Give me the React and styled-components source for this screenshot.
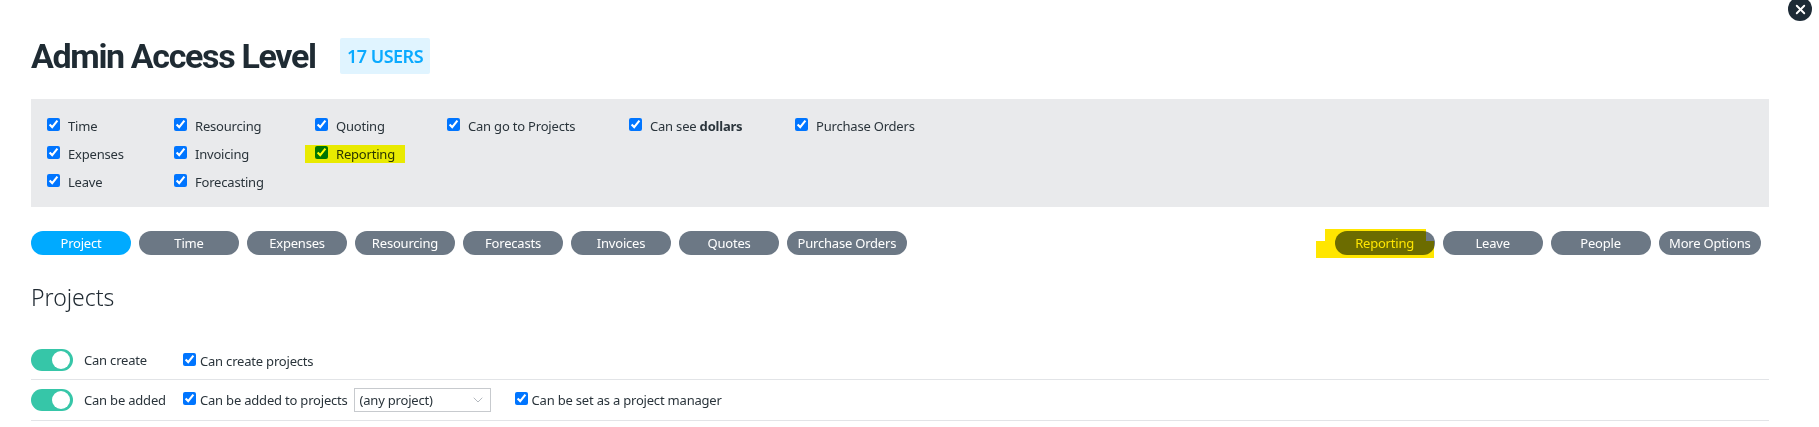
import React from "react";
import styled, { createGlobalStyle } from "styled-components";
import { ChevronDown, X } from "lucide-react";

const Global = createGlobalStyle`
  html, body { margin: 0; padding: 0; background: #fff; overflow: hidden; }
  body { font-family: "Noto Sans", "Open Sans", sans-serif; color: #212b33; }
`;

const Page = styled.div`
  position: relative;
  width: 1819px;
  height: 427px;
  box-sizing: border-box;
  padding: 38px 50px 0 31px;
`;

const CloseButton = styled.button`
  position: absolute;
  top: -3px;
  left: 1788px;
  width: 24px;
  height: 24px;
  padding: 0;
  border: 0;
  border-radius: 50%;
  background: #1d2b36;
  color: #fff;
  display: flex;
  align-items: center;
  justify-content: center;
`;

const Header = styled.header`
  display: flex;
  align-items: center;
  gap: 25px;
  height: 36px;
`;

const Title = styled.h1`
  margin: 0;
  font-family: "Roboto", sans-serif;
  font-weight: 700;
  font-size: 34px;
  line-height: 36px;
  letter-spacing: -1.35px;
  color: #1f2b33;
  width: 284px;
  white-space: nowrap;
`;

const Badge = styled.span`
  display: flex;
  align-items: center;
  justify-content: center;
  width: 90px;
  height: 36px;
  border-radius: 2px;
  background: #e0f4ff;
  color: #0aaaff;
  font-size: 18px;
  letter-spacing: -0.5px;
  font-weight: 600;
  white-space: nowrap;
`;

const AccessPanel = styled.section`
  display: flex;
  margin-top: 25px;
  height: 108px;
  box-sizing: border-box;
  padding: 13px 0 0 16px;
  background: #e9eaec;
`;

const AccessColumn = styled.div`
  display: flex;
  flex-direction: column;
  width: ${(p) => p.$width}px;
  flex: none;
`;

const AccessItem = styled.label`
  position: relative;
  display: flex;
  align-items: center;
  height: 28px;
  gap: 8px;
  font-size: 13px;
  letter-spacing: -0.2px;
  color: #2a343b;
  white-space: nowrap;
`;

const Check = styled.input.attrs({ type: "checkbox", defaultChecked: true })`
  width: 13px;
  height: 13px;
  margin: 0 0 3px 0;
  flex: none;
  accent-color: #0075ff;
`;

const Highlight = styled.span`
  position: absolute;
  left: ${(p) => p.$left}px;
  top: ${(p) => p.$top}px;
  width: ${(p) => p.$w}px;
  height: ${(p) => p.$h}px;
  background: ${(p) => p.$color};
  mix-blend-mode: multiply;
  pointer-events: none;
`;

const PillBar = styled.nav`
  display: flex;
  justify-content: space-between;
  margin-top: 24px;
  padding-right: 8px;
`;

const PillGroup = styled.div`
  display: flex;
  gap: 8px;
`;

const Pill = styled.button`
  position: relative;
  min-width: 100px;
  height: 24px;
  padding: 1px 10.5px 0;
  box-sizing: border-box;
  border: 0;
  border-radius: 12px;
  background: ${(p) => (p.$active ? "#00aaff" : "#6c7885")};
  color: #fff;
  font-family: inherit;
  font-size: 13px;
  letter-spacing: -0.2px;
  line-height: 23px;
  white-space: nowrap;
`;

const SectionTitle = styled.h2`
  margin: 29px 0 0;
  font-size: 23px;
  line-height: 26px;
  font-weight: 300;
  color: #212b33;
`;

const Rows = styled.div`
  margin-top: 30px;
`;

const Row = styled.div`
  display: flex;
  align-items: center;
  height: ${(p) => p.$height}px;
  box-sizing: border-box;
  border-bottom: 1px solid #e2e4e7;
`;

const Toggle = styled.span`
  display: flex;
  justify-content: flex-end;
  align-items: center;
  flex: none;
  width: 42px;
  height: 22px;
  padding: 2px 3px;
  box-sizing: border-box;
  border-radius: 11px;
  background: #36c6a8;
`;

const Knob = styled.span`
  width: 18px;
  height: 18px;
  border-radius: 50%;
  background: #fff;
`;

const RowLabel = styled.span`
  width: 99px;
  margin-left: 11px;
  flex: none;
  font-size: 13px;
  letter-spacing: -0.2px;
  color: #2a343b;
  white-space: nowrap;
`;

const Option = styled.label`
  display: flex;
  align-items: center;
  gap: 4px;
  font-size: 13px;
  letter-spacing: -0.2px;
  color: #2a343b;
  white-space: nowrap;
  margin-left: ${(p) => p.$offset || 0}px;
  padding-top: ${(p) => p.$down || 0}px;
`;

const SelectWrap = styled.span`
  position: relative;
  display: block;
  width: 137px;
  height: 24px;
  margin-left: 6px;
  flex: none;
  color: #b4b9bf;
`;

const Select = styled.select`
  appearance: none;
  width: 100%;
  height: 100%;
  box-sizing: border-box;
  padding: 0 5px;
  border: 1px solid #c7cace;
  border-radius: 0;
  background: #fff;
  color: #2a343b;
  font-family: inherit;
  font-size: 13px;
  letter-spacing: -0.2px;
`;

const SelectIcon = styled(ChevronDown)`
  position: absolute;
  right: 5px;
  top: 4px;
  pointer-events: none;
`;

const columns = [
  { width: 127, items: ["Time", "Expenses", "Leave"] },
  { width: 141, items: ["Resourcing", "Invoicing", "Forecasting"] },
  { width: 132, items: ["Quoting", "Reporting"] },
  { width: 182, items: ["Can go to Projects"] },
  { width: 166, items: [<React.Fragment key="d">Can see&nbsp;<b>dollars</b></React.Fragment>] },
  { width: 200, items: ["Purchase Orders"] },
];

const leftPills = ["Project", "Time", "Expenses", "Resourcing", "Forecasts", "Invoices", "Quotes", "Purchase Orders"];
const rightPills = ["Reporting", "Leave", "People", "More Options"];

export default function App() {
  return (
    <Page>
      <Global />
      <CloseButton aria-label="Close">
        <X size={15} strokeWidth={3} />
      </CloseButton>
      <Header>
        <Title>Admin Access Level</Title>
        <Badge>17 USERS</Badge>
      </Header>
      <AccessPanel>
        {columns.map((col, i) => (
          <AccessColumn key={i} $width={col.width}>
            {col.items.map((item, j) => (
              <AccessItem key={j}>
                <Check />
                <span>{item}</span>
                {item === "Reporting" && <Highlight $left={-10} $top={5} $w={100} $h={18} $color="#ffff00" />}
              </AccessItem>
            ))}
          </AccessColumn>
        ))}
      </AccessPanel>
      <PillBar>
        <PillGroup>
          {leftPills.map((p, i) => (
            <Pill key={p} $active={i === 0}>{p}</Pill>
          ))}
        </PillGroup>
        <PillGroup>
          {rightPills.map((p) => (
            <Pill key={p}>
              {p}
              {p === "Reporting" && (
                <>
                  <Highlight $left={-10} $top={-2} $w={101} $h={12} $color="#ffe600" />
                  <Highlight $left={-19} $top={10} $w={118} $h={17} $color="#ffe600" />
                </>
              )}
            </Pill>
          ))}
        </PillGroup>
      </PillBar>
      <SectionTitle>Projects</SectionTitle>
      <Rows>
        <Row $height={40}>
          <Toggle><Knob /></Toggle>
          <RowLabel>Can create</RowLabel>
          <Option $down={2}><Check />Can create projects</Option>
        </Row>
        <Row $height={41}>
          <Toggle><Knob /></Toggle>
          <RowLabel>Can be added</RowLabel>
          <Option><Check />Can be added to projects</Option>
          <SelectWrap>
            <Select defaultValue="any"><option value="any">(any project)</option></Select>
            <SelectIcon size={16} strokeWidth={1.5} />
          </SelectWrap>
          <Option $offset={24}><Check />Can be set as a project manager</Option>
        </Row>
      </Rows>
    </Page>
  );
}
